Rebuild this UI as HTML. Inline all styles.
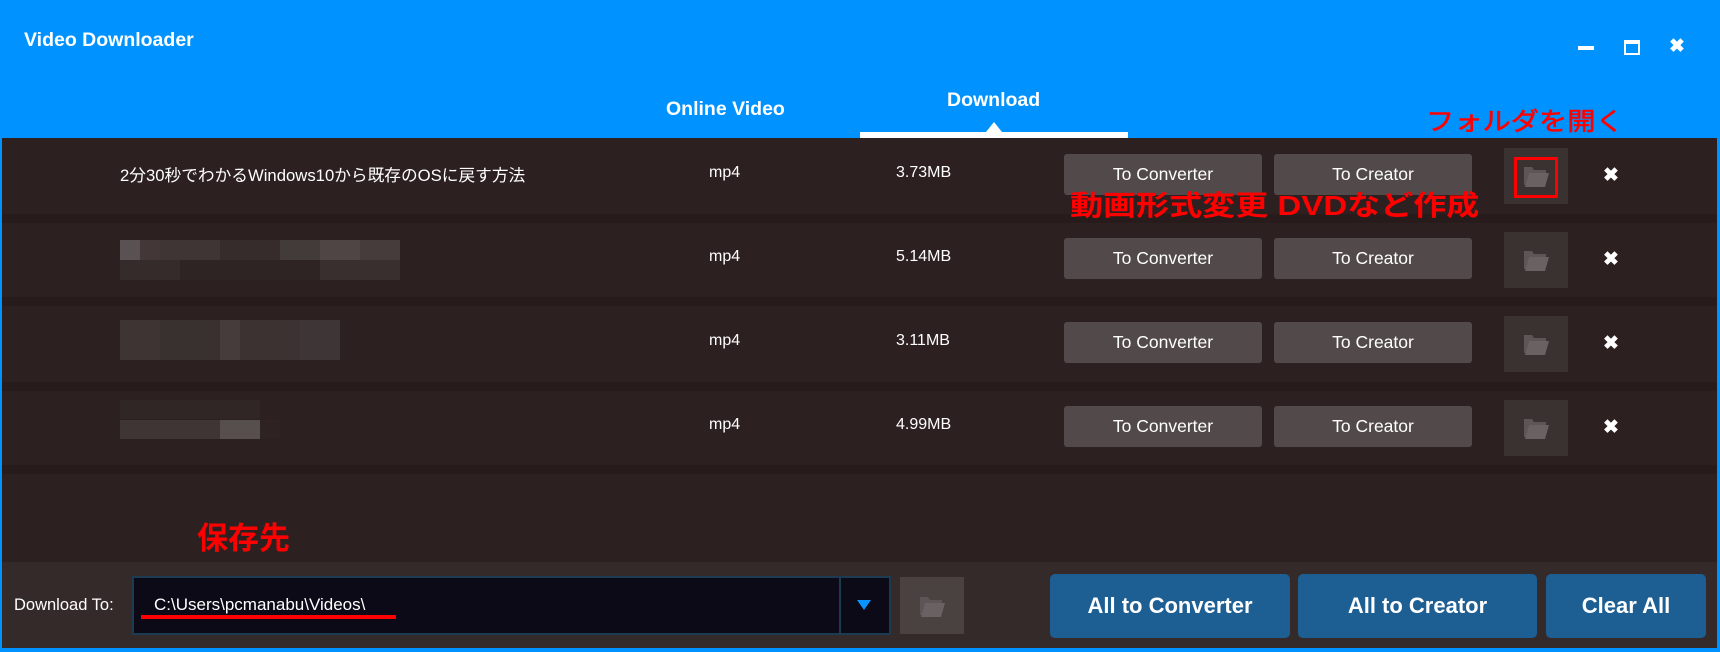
<!DOCTYPE html>
<html><head><meta charset="utf-8"><style>
*{margin:0;padding:0;box-sizing:border-box}
body{width:1720px;height:652px;position:relative;overflow:hidden;background:#0093ff;font-family:"Liberation Sans","Noto Sans CJK JP",sans-serif;color:#fff}
.a{position:absolute}
.main{left:2px;top:138px;width:1715px;height:424px;background:#2c2020}
.sep{left:2px;width:1715px;height:9px;background:#271b1b}
.bot{left:2px;top:562px;width:1715px;height:86px;background:#352a2a}
.btn{position:absolute;width:198px;height:41px;background:#524a4a;border-radius:3px;font-size:17.5px;text-align:center;line-height:41px;color:#fff}
.fb{position:absolute;width:64px;height:56px;background:#3a3131}
.x{position:absolute;font-size:19px;font-weight:bold}
.t{position:absolute;font-size:16px}
.big{position:absolute;height:64px;background:#1d5e93;border-radius:5px;font-size:22px;font-weight:bold;text-align:center;line-height:64px}
.red{position:absolute;color:#ff0000;font-weight:bold;transform-origin:left top}
</style></head><body>
<div class="a" style="left:24px;top:29px;font-size:19.5px;font-weight:bold">Video Downloader</div>
<div class="a" style="left:1578px;top:46px;width:16px;height:4px;background:#fff"></div>
<div class="a" style="left:1624px;top:40px;width:16px;height:15px;border:2px solid #fff;border-top-width:4px"></div>
<div class="a" style="left:1669px;top:35px;font-size:19px;font-weight:bold">✖</div>
<div class="a" style="left:666px;top:98px;font-size:19.5px;font-weight:bold">Online Video</div>
<div class="a" style="left:947px;top:89px;font-size:19.5px;font-weight:bold">Download</div>
<div class="a" style="left:860px;top:132px;width:268px;height:6px;background:#fff"></div>
<div class="a" style="left:986px;top:122px;width:0;height:0;border-left:8px solid transparent;border-right:8px solid transparent;border-bottom:10px solid #fff"></div>
<div class="red" style="left:1426px;top:102px;font-size:25px;font-weight:normal;-webkit-text-stroke:0.6px #f00;transform:scaleX(1.13)">フォルダを開く</div>

<div class="a main"></div>
<div class="a sep" style="top:214px"></div>
<div class="a sep" style="top:297px"></div>
<div class="a sep" style="top:382px"></div>
<div class="a sep" style="top:465px"></div>
<div class="a bot"></div>

<div class="t" style="left:120px;top:162px;font-size:16.7px">2分30秒でわかるWindows10から既存のOSに戻す方法</div>

<div class="t" style="left:709px;top:164px">mp4</div><div class="t" style="left:896px;top:164px">3.73MB</div>
<div class="t" style="left:709px;top:248px">mp4</div><div class="t" style="left:896px;top:248px">5.14MB</div>
<div class="t" style="left:709px;top:332px">mp4</div><div class="t" style="left:896px;top:332px">3.11MB</div>
<div class="t" style="left:709px;top:416px">mp4</div><div class="t" style="left:896px;top:416px">4.99MB</div>

<div class="btn" style="left:1064px;top:154px">To Converter</div><div class="btn" style="left:1274px;top:154px">To Creator</div>
<div class="btn" style="left:1064px;top:238px">To Converter</div><div class="btn" style="left:1274px;top:238px">To Creator</div>
<div class="btn" style="left:1064px;top:322px">To Converter</div><div class="btn" style="left:1274px;top:322px">To Creator</div>
<div class="btn" style="left:1064px;top:406px">To Converter</div><div class="btn" style="left:1274px;top:406px">To Creator</div>

<svg width="0" height="0" style="position:absolute"><defs><g id="f"><path d="M2 4h8l2 3h12v3H7L4 22H2z" fill="#5e5656"/><path d="M7 10h20l-4 14H3z" fill="#6a6262"/></g></defs></svg>
<div class="fb" style="left:1504px;top:148px"><svg class="a" style="left:18px;top:15px" width="30" height="26"><use href="#f"/></svg></div>
<div class="fb" style="left:1504px;top:232px"><svg class="a" style="left:18px;top:15px" width="30" height="26"><use href="#f"/></svg></div>
<div class="fb" style="left:1504px;top:316px"><svg class="a" style="left:18px;top:15px" width="30" height="26"><use href="#f"/></svg></div>
<div class="fb" style="left:1504px;top:400px"><svg class="a" style="left:18px;top:15px" width="30" height="26"><use href="#f"/></svg></div>
<div class="a" style="left:1514px;top:157px;width:44px;height:41px;border:3px solid #f00"></div>

<div class="x" style="left:1603px;top:164px">✖</div>
<div class="x" style="left:1603px;top:248px">✖</div>
<div class="x" style="left:1603px;top:332px">✖</div>
<div class="x" style="left:1603px;top:416px">✖</div>

<div class="a" style="left:120px;top:240px;width:280px;height:20px;background:linear-gradient(90deg,#5a5152 0 20px,#433837 20px 40px,#3f3535 40px 100px,#352c2b 100px 160px,#433a3a 160px 200px,#504545 200px 240px,#453c3b 240px 280px)"></div>
<div class="a" style="left:120px;top:260px;width:280px;height:20px;background:linear-gradient(90deg,#352b2a 0 60px,#2f2424 60px 200px,#3a2f2f 200px 280px)"></div>
<div class="a" style="left:120px;top:320px;width:220px;height:40px;background:linear-gradient(90deg,#3e3433 0 40px,#393030 40px 100px,#453c3b 100px 120px,#3b3231 120px 180px,#3e3536 180px 220px)"></div>
<div class="a" style="left:120px;top:400px;width:140px;height:19px;background:#312626"></div>
<div class="a" style="left:120px;top:420px;width:160px;height:19px;background:linear-gradient(90deg,#3f3534 0 100px,#574e4e 100px 140px,#2f2222 140px 160px)"></div>

<div class="red" style="left:1070px;top:184px;font-size:28px;transform:scaleX(1.18)">動画形式変更 DVDなど作成</div>
<div class="red" style="left:197px;top:513px;font-size:31px">保存先</div>

<div class="t" style="left:14px;top:596px;font-size:16.5px">Download To:</div>
<div class="a" style="left:132px;top:576px;width:759px;height:59px;background:#0c0a16;border:2px solid #1c3a52"></div>
<div class="a" style="left:839px;top:578px;width:2px;height:55px;background:#1c3a52"></div>
<div class="a" style="left:857px;top:600px;width:0;height:0;border-left:7px solid transparent;border-right:7px solid transparent;border-top:10px solid #0a93ff"></div>
<div class="t" style="left:154px;top:595px;font-size:17px">C:\Users\pcmanabu\Videos\</div>
<div class="a" style="left:141px;top:615px;width:255px;height:4px;background:#f00"></div>
<div class="fb" style="left:900px;top:577px;height:57px;background:#4a4141"><svg class="a" style="left:18px;top:16px" width="30" height="26"><use href="#f"/></svg></div>

<div class="big" style="left:1050px;top:574px;width:240px">All to Converter</div>
<div class="big" style="left:1298px;top:574px;width:239px">All to Creator</div>
<div class="big" style="left:1546px;top:574px;width:160px">Clear All</div>
</body></html>
